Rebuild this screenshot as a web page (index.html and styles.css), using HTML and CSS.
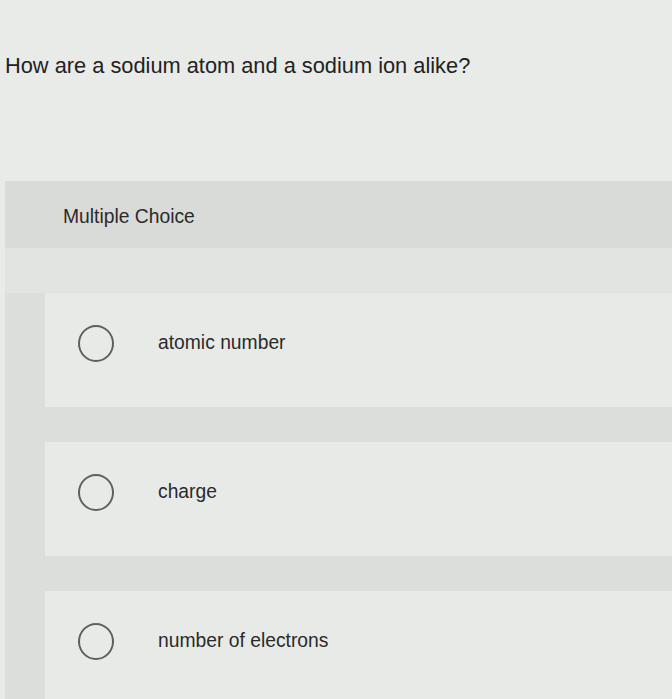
FILE: index.html
```html
<!DOCTYPE html>
<html>
<head>
<meta charset="utf-8">
<link rel="stylesheet" href="styles.css">
</head>
<body>
<div class="page">
  <h1 class="question">How are a sodium atom and a sodium ion alike?</h1>
  <section class="panel">
    <div class="panel-header">Multiple Choice</div>
    <div class="panel-band"></div>
    <div class="options">
      <label class="option">
        <span class="radio"></span>
        <span class="option-text">atomic number</span>
      </label>
      <label class="option">
        <span class="radio"></span>
        <span class="option-text">charge</span>
      </label>
      <label class="option">
        <span class="radio"></span>
        <span class="option-text">number of electrons</span>
      </label>
    </div>
  </section>
</div>
</body>
</html>
```

FILE: styles.css
```css
html, body {
  margin: 0;
  padding: 0;
}
body {
  background: #e9ebe8;
  font-family: "Liberation Sans", Arial, sans-serif;
  color: #2a2b2a;
  width: 672px;
  height: 699px;
  overflow: hidden;
}
.page {
  padding-top: 53px;
}
.question {
  margin: 0 0 0 5px;
  font-size: 21.8px;
  line-height: 26px;
  font-weight: 400;
  color: #222;
}
.panel {
  margin: 102px 0 0 5px;
  background: #dcdedb;
}
.panel-header {
  height: 67px;
  display: flex;
  align-items: center;
  padding-left: 58px;
  padding-top: 4px;
  box-sizing: border-box;
  font-size: 19.3px;
  color: #2a2b2a;
  background: #d9dbd8;
}
.panel-band {
  height: 45px;
  background: #e2e4e1;
}
.options {
  display: flex;
  flex-direction: column;
  gap: 35px;
  padding-left: 40px;
}
.option {
  height: 114px;
  background: #e8eae7;
  display: flex;
  align-items: center;
  padding-left: 33px;
  padding-bottom: 14px;
  box-sizing: border-box;
}
.radio {
  width: 36px;
  height: 37px;
  border: 2.5px solid #5e605e;
  border-radius: 50%;
  box-sizing: border-box;
  flex: none;
}
.option-text {
  margin-left: 44px;
  font-size: 19.3px;
  color: #2a2b2a;
}
```
